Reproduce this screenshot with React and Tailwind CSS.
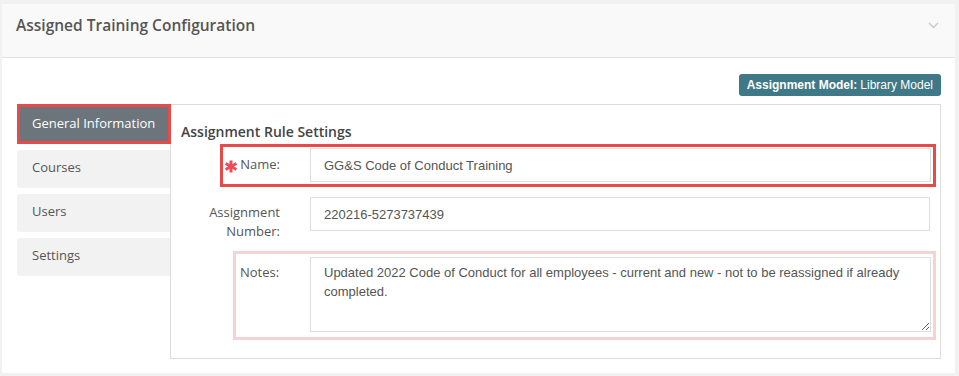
import React from "react";

const tabs = ["Courses", "Users", "Settings"];

const labelFont = { fontFamily: '"Open Sans", sans-serif' };
const inputFont = { fontFamily: '"Liberation Sans", Arial, sans-serif' };

function RequiredStar() {
  return (
    <svg width="14" height="13" viewBox="0 0 14 13" className="mr-[2px] mt-[2px]">
      <g stroke="#ee4a57" strokeWidth="3">
        <path d="M7 0.5v12" />
        <path d="M1.6 3.5l10.8 6" />
        <path d="M1.6 9.5l10.8-6" />
      </g>
    </svg>
  );
}

export default function App() {
  return (
    <div className="w-[959px] h-[376px] bg-[#f1f1f1] pt-[4px] pl-[2px] pr-[4px]" style={labelFont}>
      <div className="bg-white h-[369px] flex flex-col">
        {/* header */}
        <div className="h-[54px] bg-[#f9f9f9] border-b border-[#e2e2e2] flex items-start justify-between pl-[14px] pr-[16px] pt-[10px]">
          <span className="text-[15.5px] font-semibold text-[#555] leading-[22px]">Assigned Training Configuration</span>
          <svg width="11" height="7" viewBox="0 0 11 7" className="mt-[8px]">
            <path d="M1 1l4.5 4.5L10 1" fill="none" stroke="#c8c8c8" strokeWidth="1.4" />
          </svg>
        </div>

        {/* body */}
        <div className="flex flex-col pl-[15px] pr-[14px] pt-[16px]">
          <div className="flex justify-end">
            <span className="h-[22px] px-[8px] rounded-[3px] bg-[#3f7886] text-white text-[12px] flex items-center" style={inputFont}>
              <b className="font-bold">Assignment Model:</b>
              <span className="ml-[3px]">Library Model</span>
            </span>
          </div>

          <div className="flex mt-[8px]">
            <div className="w-[153px] flex flex-col gap-[5px]">
              <div className="relative z-10 w-[154px] h-[40px] border-[3px] border-[#e84a4a] bg-[#6b757b] text-white text-[13px] flex items-center pl-[12px]">
                General Information
              </div>
              {tabs.map((t) => (
                <div
                  key={t}
                  className="h-[38px] mt-[1px] bg-[#f2f2f2] rounded-l-[3px] text-[13px] text-[#555] flex items-center pl-[15px] pb-[2px]"
                >
                  {t}
                </div>
              ))}
            </div>

            <div className="flex-1 border border-[#dddddd] h-[255px] pl-[10px] pr-[4px] pt-[17px]">
              <div className="text-[14px] font-semibold text-[#444] leading-[20px]">Assignment Rule Settings</div>

              {/* name */}
              <div className="mt-[2px] ml-[39px] border-[3px] border-[#e84a4a] flex items-start pt-[1px] pb-[2px] pr-[2px]">
                <div className="w-[57px] h-[34px] flex items-center justify-end text-[13px] text-[#555]">
                  <RequiredStar />
                  Name:
                </div>
                <input
                  readOnly
                  value="GG&S Code of Conduct Training"
                  className="ml-[30px] flex-1 h-[34px] border border-[#dddddd] px-[13px] text-[13px] text-[#555] outline-none"
                  style={inputFont}
                />
              </div>

              {/* assignment number */}
              <div className="mt-[10px] flex items-start pr-[6px]">
                <div className="w-[99px] pt-[6px] text-right text-[13px] text-[#555] leading-[19px]">
                  Assignment
                  <br />
                  Number:
                </div>
                <input
                  readOnly
                  value="220216-5273737439"
                  className="ml-[30px] flex-1 h-[34px] border border-[#dddddd] px-[13px] text-[13px] text-[#555] outline-none"
                  style={inputFont}
                />
              </div>

              {/* notes */}
              <div className="mt-[10px] ml-[52px] border-[3px] border-[#f5d3d3] flex items-start pt-[3px] pb-[5px] pr-[2px]">
                <div className="w-[74px] pt-[6px] pl-[4px] text-[13px] text-[#555] leading-[19px]">Notes:</div>
                <textarea
                  readOnly
                  value="Updated 2022 Code of Conduct for all employees - current and new - not to be reassigned if already completed."
                  className="flex-1 h-[75px] border border-[#dddddd] px-[13px] pt-[5px] text-[13px] leading-[19px] text-[#555] outline-none resize-y"
                  style={inputFont}
                />
              </div>
            </div>
          </div>
        </div>
      </div>
    </div>
  );
}
